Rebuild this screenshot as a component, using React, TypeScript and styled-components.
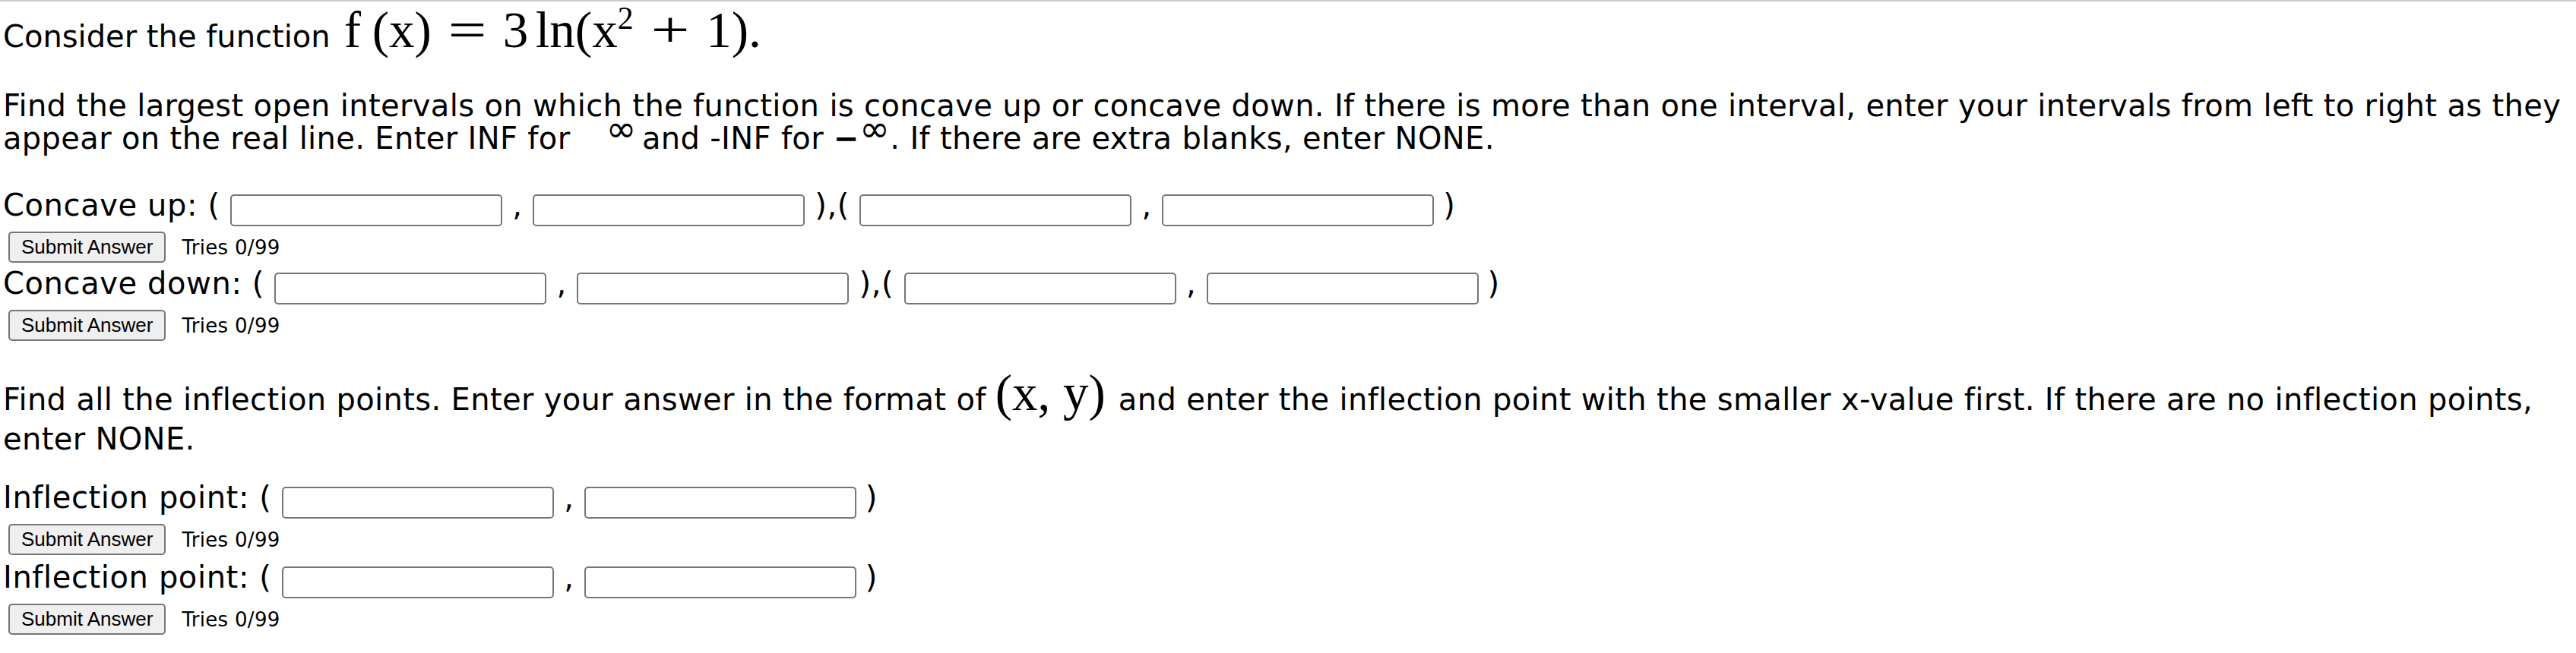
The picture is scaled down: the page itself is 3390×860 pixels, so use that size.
import React from "react";
import styled, { createGlobalStyle } from "styled-components";

const GlobalStyle = createGlobalStyle`
    html, body {
        margin: 0;
        padding: 0;
        background: #ffffff;
    }
    body {
        font-family: "DejaVu Sans", Verdana, sans-serif;
        color: #000000;
    }
`;

type Interval = { blanks: number };

const Page = styled.div`
    border-top: 2px solid #cccccc;
    padding: 0 4px;
    font-size: 40px;
    line-height: 43px;
`;

const Lead = styled.div`
    margin-top: 4px;
`;

const MathText = styled.span<{ $gap: number; $tall?: boolean }>`
    font-family: "Liberation Serif", "Times New Roman", serif;
    font-size: 67px;
    line-height: ${(props) => (props.$tall ? 1.2 : 1)};
    letter-spacing: normal;
    margin: 0 ${(props) => props.$gap / 3}px 0 ${(props) => props.$gap}px;
`;

const Spaced = styled.span<{ $space: number }>`
    margin-right: ${(props) => props.$space}em;
`;

const Sup = styled.span`
    font-size: 0.62em;
    line-height: 0;
    vertical-align: 24px;
    margin-right: 0.04em;
`;

const Op = styled.span`
    display: inline-block;
    margin: 0 0.42em;
    transform: scaleX(1.35);
`;

const Para = styled.div<{ $top: number }>`
    margin-top: ${(props) => props.$top}px;
    letter-spacing: 0.35px;
`;

const Inf = styled.span<{ $spaced?: boolean }>`
    font-size: 48px;
    line-height: 0;
    vertical-align: 10px;
    margin-left: ${(props) => (props.$spaced ? "34px" : "0")};
    margin-right: ${(props) => (props.$spaced ? "-6px" : "0")};
`;

const NegSign = styled.span`
    font-weight: bold;
`;

const AnswerRow = styled.div<{ $top: number }>`
    margin-top: ${(props) => props.$top}px;
    letter-spacing: 0.6px;
`;

const Blank = styled.input`
    box-sizing: border-box;
    width: 358px;
    height: 42px;
    margin: 0;
    padding: 0 6px;
    border: 2px solid #767676;
    border-radius: 5px;
    background: #ffffff;
    font-family: "DejaVu Sans", Verdana, sans-serif;
    font-size: 20px;
    line-height: normal;
    vertical-align: baseline;
`;

const Close = styled.span`
    margin-left: 12px;
`;

const SubmitRow = styled.div`
    display: flex;
    align-items: center;
    padding: 7px 0 6px;
`;

const SubmitButton = styled.button`
    box-sizing: border-box;
    height: 41px;
    margin: 0 0 0 7px;
    padding: 0 15px;
    border: 2px solid #767676;
    border-radius: 5px;
    background: #efefef;
    color: #000000;
    font-family: "Liberation Sans", Arial, sans-serif;
    font-size: 26px;
    letter-spacing: normal;
`;

const Tries = styled.span`
    margin-left: 21px;
    font-size: 26px;
    line-height: normal;
    letter-spacing: 0.3px;
`;

const Answer = ({
    label,
    intervals,
    top,
}: {
    label: string;
    intervals: Interval[];
    top: number;
}) => {
    return (
        <>
            <AnswerRow $top={top}>
                {label + ": ( "}
                {intervals.map((interval, index) => (
                    <React.Fragment key={index}>
                        {index > 0 ? " ),( " : null}
                        <Blank type="text" />
                        {" , "}
                        <Blank type="text" />
                    </React.Fragment>
                ))}
                <Close>)</Close>
            </AnswerRow>
            <SubmitRow>
                <SubmitButton type="button">Submit Answer</SubmitButton>
                <Tries>Tries 0/99</Tries>
            </SubmitRow>
        </>
    );
};

export default function App() {
    return (
        <Page>
            <GlobalStyle />
            <Lead>
                Consider the function
                <MathText $gap={18}>
                    <Spaced $space={0.22}>f</Spaced>(x)
                    <Op>=</Op>
                    <Spaced $space={0.14}>3</Spaced>ln(x<Sup>2</Sup>
                    <Op>+</Op>1).
                </MathText>
            </Lead>
            <Para $top={45}>
                Find the largest open intervals on which the function is
                concave up or concave down. If there is more than one
                interval, enter your intervals from left to right as they
                appear on the real line. Enter INF for{" "}
                <Inf $spaced>∞</Inf> and -INF for{" "}
                <NegSign>−</NegSign>
                <Inf>∞</Inf>. If there are extra blanks, enter NONE.
            </Para>
            <Answer
                label="Concave up"
                intervals={[{ blanks: 2 }, { blanks: 2 }]}
                top={45}
            />
            <Answer
                label="Concave down"
                intervals={[{ blanks: 2 }, { blanks: 2 }]}
                top={0}
            />
            <Para $top={22}>
                Find all the inflection points. Enter your answer in the
                format of
                <MathText $gap={12} $tall>
                    (x, y)
                </MathText>{" "}
                and enter the inflection point with the smaller x-value
                first. If there are no inflection points, enter NONE.
            </Para>
            <Answer label="Inflection point" intervals={[{ blanks: 2 }]} top={34} />
            <Answer label="Inflection point" intervals={[{ blanks: 2 }]} top={2} />
        </Page>
    );
}
